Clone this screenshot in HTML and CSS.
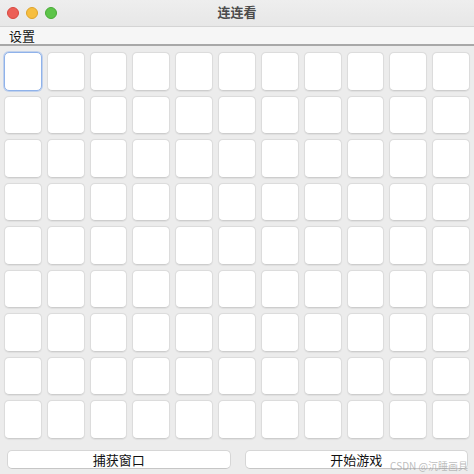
FILE: index.html
```html
<!DOCTYPE html>
<html lang="zh-CN">
<head>
<meta charset="utf-8">
<title>连连看</title>
<link rel="stylesheet" href="styles.css">
</head>
<body>
<div class="window">
  <header class="titlebar">
    <div class="lights">
      <span class="light close"></span>
      <span class="light minimize"></span>
      <span class="light zoom"></span>
    </div>
    <div class="title">连连看</div>
    <div class="spacer"></div>
  </header>
  <nav class="menubar">
    <span class="menu-item">设置</span>
  </nav>
  <main class="board" id="board"></main>
  <footer class="actions">
    <button class="btn" type="button">捕获窗口</button>
    <button class="btn" type="button">开始游戏</button>
  </footer>
  <div class="watermark">CSDN @沉睡画具</div>
</div>
<script src="app.js"></script>
</body>
</html>
```

FILE: app.js
```js
const board = document.getElementById('board');
for (let r = 0; r < 9; r++) {
  for (let c = 0; c < 11; c++) {
    const tile = document.createElement('div');
    tile.className = 'tile' + (r === 0 && c === 0 ? ' focused' : '');
    board.appendChild(tile);
  }
}
```

FILE: styles.css
```css
* { box-sizing: border-box; }

html, body {
  margin: 0;
  padding: 0;
  width: 474px;
  height: 474px;
  overflow: hidden;
  background: #ececec;
}

.window {
  position: relative;
  width: 474px;
  height: 474px;
  display: flex;
  flex-direction: column;
  background: #ececec;
  font-family: "Noto Sans CJK SC", "Noto Sans", sans-serif;
}

/* Title bar */
.titlebar {
  height: 27px;
  display: grid;
  grid-template-columns: 1fr auto 1fr;
  align-items: center;
  background: linear-gradient(#eeeeee, #e7e7e7);
  border-bottom: 1px solid #d4d4d4;
}

.lights {
  display: flex;
  gap: 7px;
  padding-left: 7px;
  padding-bottom: 1px;
  align-items: center;
}

.light {
  width: 12px;
  height: 12px;
  border-radius: 50%;
}
.light.close { background: #ec5f57; border: 0.5px solid #d9483f; }
.light.minimize { background: #f6be3f; border: 0.5px solid #dea32a; }
.light.zoom { background: #5dc449; border: 0.5px solid #47aa35; }

.title {
  font-size: 13px;
  font-weight: 700;
  color: #4b4b4b;
  line-height: 1;
  padding-bottom: 3px;
}

/* Menu bar */
.menubar {
  height: 19px;
  display: flex;
  align-items: center;
  padding-left: 9px;
  background: #f6f6f6;
  border-bottom: 2px solid #a8a8a8;
}

.menu-item {
  font-size: 13px;
  color: #141414;
  line-height: 1;
  padding-bottom: 1px;
}

/* Tile board */
.board {
  margin: 6px 4px 0 4px;
  height: 387px;
  display: grid;
  grid-template-columns: repeat(11, 1fr);
  grid-template-rows: repeat(9, 1fr);
  gap: 5px;
}

.tile {
  background: #ffffff;
  border: 1px solid #dcdcdc;
  border-bottom-color: #cdcdcd;
  border-radius: 5px;
  box-shadow: 0 0.5px 1px rgba(0, 0, 0, 0.06);
}

.tile.focused {
  border: 1px solid #8fb2ea;
  box-shadow: 0 0 0 1px rgba(143, 178, 234, 0.45);
}

/* Bottom buttons */
.actions {
  margin-top: 11px;
  padding: 0 6px 0 7px;
  display: grid;
  grid-template-columns: 1fr 1fr;
  gap: 14px;
}

.btn {
  height: 19px;
  padding: 0;
  background: #ffffff;
  border: 1px solid #d6d6d6;
  border-bottom-color: #c6c6c6;
  border-radius: 5px;
  font-family: "Noto Sans CJK SC", "Noto Sans", sans-serif;
  font-size: 13px;
  line-height: 17px;
  color: #111111;
  text-align: center;
}

.watermark {
  position: absolute;
  right: 6px;
  bottom: 3px;
  font-size: 10px;
  color: rgba(160, 160, 160, 0.7);
  font-family: "Noto Sans CJK SC", "Noto Sans", sans-serif;
  line-height: 1;
}
```
